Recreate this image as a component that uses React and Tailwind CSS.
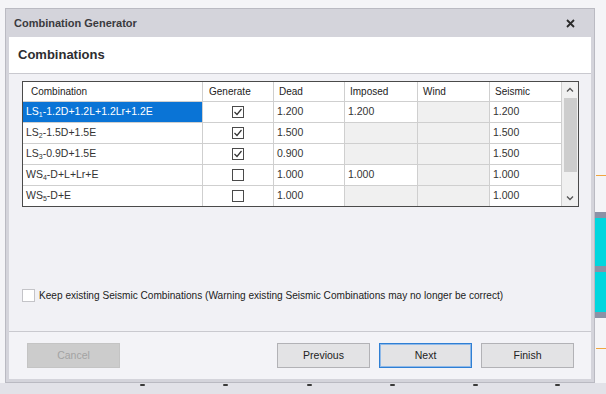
import React from "react";

const rows = [
  { pre: "LS", sub: "1", rest: "-1.2D+1.2L+1.2Lr+1.2E", gen: true, dead: "1.200", imposed: "1.200", seismic: "1.200", selected: true },
  { pre: "LS", sub: "2", rest: "-1.5D+1.5E", gen: true, dead: "1.500", imposed: "", seismic: "1.500" },
  { pre: "LS", sub: "3", rest: "-0.9D+1.5E", gen: true, dead: "0.900", imposed: "", seismic: "1.500" },
  { pre: "WS", sub: "4", rest: "-D+L+Lr+E", gen: false, dead: "1.000", imposed: "1.000", seismic: "1.000" },
  { pre: "WS", sub: "5", rest: "-D+E", gen: false, dead: "1.000", imposed: "", seismic: "1.000" },
];

const CheckBox = ({ checked }) => (
  <div className="w-[12px] h-[12px] border border-[#4a4a4a] bg-white flex items-center justify-center">
    {checked && (
      <svg width="10" height="10" viewBox="0 0 10 10">
        <polyline points="1.5,5 4,7.5 8.5,2" fill="none" stroke="#333" strokeWidth="1.2" />
      </svg>
    )}
  </div>
);

const Button = ({ label, variant }) => {
  if (variant === "disabled") {
    return (
      <div className="w-[93px] h-[25px] bg-[#cccccc] border border-[#c4c4c4] flex items-center justify-center text-[10.5px] text-[#a3a3a3]">
        {label}
      </div>
    );
  }
  if (variant === "default") {
    return (
      <div className="w-[93px] h-[25px] bg-[#e3e3e5] border border-[#2f7fd4] shadow-[inset_0_0_0_1px_#8fb9e8] flex items-center justify-center text-[10.5px] text-[#222]">
        {label}
      </div>
    );
  }
  return (
    <div className="w-[93px] h-[25px] bg-[#e3e3e5] border border-[#b2b2b6] flex items-center justify-center text-[10.5px] text-[#222]">
      {label}
    </div>
  );
};

const App = () => {
  return (
    <div className="relative w-[606px] h-[394px] overflow-hidden bg-[#f4f4f7] font-['Liberation_Sans',Arial,sans-serif]">
      {/* desktop behind the dialog */}
      <div className="absolute left-0 right-0 top-[383px] bottom-0 bg-[#e2e2e8]">
        {[140, 223, 307, 390, 473, 555].map((x) => (
          <div key={x} className="absolute top-[1px] w-[5px] h-[2px] rounded-full bg-[#3a3a3a]" style={{ left: x }} />
        ))}
      </div>
      <div className="absolute left-[596px] right-0 top-[175px] h-px bg-[#f0a640]" />
      <div className="absolute left-[596px] right-0 top-[348px] h-px bg-[#f0a640]" />
      <div className="absolute left-[595px] right-0 top-[212px] h-[106px] bg-[#8b92a6] flex flex-col gap-[6px] py-[6px]">
        <div className="h-[48px] bg-[#00d6de]" />
        <div className="h-[40px] bg-[#00d6de]" />
      </div>

      {/* dialog window */}
      <div className="absolute left-[5px] top-[8px] w-[590px] h-[375px] bg-[#d4d4db] border border-[#babac2] px-[3px] pb-[3px] flex flex-col">
        <div className="h-[28px] flex items-center justify-between pl-[5px] pr-[16px]">
          <span className="text-[11px] font-bold text-[#3a3a3e]">Combination Generator</span>
          <svg width="9" height="9" viewBox="0 0 9 9">
            <path d="M1 1 L8 8 M8 1 L1 8" stroke="#2a2a2a" strokeWidth="1.8" />
          </svg>
        </div>

        <div className="flex-1 flex flex-col bg-[#f1f1f5]">
          <div className="h-[37px] bg-white border-b border-[#c9c9cf] flex items-center pl-[9px]">
            <span className="text-[13px] font-bold text-[#2d2d30]">Combinations</span>
          </div>

          <div className="flex-1 flex flex-col pl-[13px] pt-[7px]">
            {/* grid */}
            <div className="w-[557px] border border-[#4a4a4a] bg-white flex">
              <div className="flex flex-col w-[539px]">
                <div className="h-[20px] flex border-b border-[#cfcfcf] text-[10px] text-[#222]">
                  <div className="w-[180px] border-r border-[#cfcfcf] pl-[8px] flex items-center">Combination</div>
                  <div className="w-[71px] border-r border-[#cfcfcf] pl-[6px] flex items-center">Generate</div>
                  <div className="w-[71px] border-r border-[#cfcfcf] pl-[5px] flex items-center">Dead</div>
                  <div className="w-[73px] border-r border-[#cfcfcf] pl-[5px] flex items-center">Imposed</div>
                  <div className="w-[72px] border-r border-[#cfcfcf] pl-[5px] flex items-center">Wind</div>
                  <div className="w-[72px] border-r border-[#cfcfcf] pl-[5px] flex items-center">Seismic</div>
                </div>
                {rows.map((r, i) => (
                  <div
                    key={i}
                    className={`flex text-[10.5px] text-[#333] ${i === rows.length - 1 ? "h-[20px]" : "h-[21px] border-b border-[#cfcfcf]"}`}
                  >
                    <div
                      className={`w-[180px] border-r border-[#cfcfcf] pl-[3px] flex items-center ${r.selected ? "bg-[#0a74d6] text-white" : ""}`}
                    >
                      {r.pre}
                      <span className="text-[7px] relative top-[3px]">{r.sub}</span>
                      {r.rest}
                    </div>
                    <div className="w-[71px] border-r border-[#cfcfcf] flex items-center justify-center pr-[1px]">
                      <CheckBox checked={r.gen} />
                    </div>
                    <div className="w-[71px] border-r border-[#cfcfcf] pl-[3px] flex items-center">{r.dead}</div>
                    <div className={`w-[73px] border-r border-[#cfcfcf] pl-[3px] flex items-center ${r.imposed ? "" : "bg-[#f0f0f0]"}`}>
                      {r.imposed}
                    </div>
                    <div className="w-[72px] border-r border-[#cfcfcf] bg-[#f0f0f0]" />
                    <div className="w-[72px] border-r border-[#cfcfcf] pl-[3px] flex items-center">{r.seismic}</div>
                  </div>
                ))}
              </div>
              {/* scrollbar */}
              <div className="w-[16px] bg-[#f0f0f0] flex flex-col items-center">
                <div className="h-[16px] flex items-center justify-center">
                  <svg width="8" height="6" viewBox="0 0 8 6">
                    <polyline points="1,4.5 4,1.5 7,4.5" fill="none" stroke="#555" strokeWidth="1.3" />
                  </svg>
                </div>
                <div className="w-[13px] h-[74px] bg-[#cdcdcd]" />
                <div className="flex-1" />
                <div className="h-[16px] flex items-center justify-center">
                  <svg width="8" height="6" viewBox="0 0 8 6">
                    <polyline points="1,1.5 4,4.5 7,1.5" fill="none" stroke="#555" strokeWidth="1.3" />
                  </svg>
                </div>
              </div>
            </div>

            <div className="mt-[81px] flex items-center">
              <div className="w-[13px] h-[13px] bg-white border border-[#c4c4c8]" />
              <span className="ml-[4px] text-[10.1px] text-[#222]">
                Keep existing Seismic Combinations (Warning existing Seismic Combinations may no longer be correct)
              </span>
            </div>
          </div>

          <div className="h-[48px] border-t border-[#c9c9cf] bg-[#f3f3f7] flex items-start pt-[11px] pl-[18px] pr-[17px]">
            <Button label="Cancel" variant="disabled" />
            <div className="ml-auto flex gap-[9px]">
              <Button label="Previous" />
              <Button label="Next" variant="default" />
              <Button label="Finish" />
            </div>
          </div>
        </div>
      </div>
    </div>
  );
};

export default App;
